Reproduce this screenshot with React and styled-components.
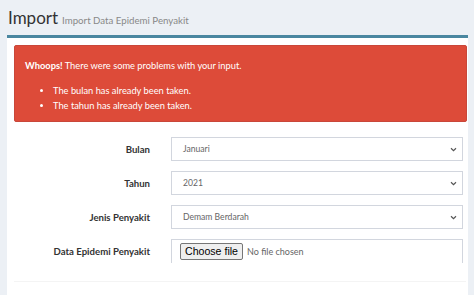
import React from 'react';
import styled, { createGlobalStyle } from 'styled-components';

const GlobalStyle = createGlobalStyle`
  body {
    margin: 0;
    background: #ecf0f5;
    font-family: Lato, 'Noto Sans', sans-serif;
  }
`;

const Page = styled.div`
  width: 474px;
  height: 295px;
  overflow: hidden;
  padding-left: 7px;
  box-sizing: border-box;
`;

const Header = styled.div`
  display: flex;
  align-items: baseline;
  height: 35px;
  padding: 7px 0 0 1px;
  box-sizing: border-box;
`;

const Title = styled.h1`
  margin: 0;
  font-size: 17px;
  font-weight: 400;
  color: #333;
  line-height: 22px;
`;

const SubTitle = styled.small`
  margin-left: 4px;
  font-size: 9.7px;
  color: #888;
`;

const Box = styled.div`
  width: 461px;
  background: #fff;
  border-top: 3px solid #4a87a0;
  padding: 7px 0 0 7px;
  box-sizing: border-box;
  height: 260px;
`;

const Alert = styled.div`
  width: 453px;
  background: #dd4b39;
  border: 1px solid #c9473a;
  border-radius: 2px;
  color: #fff;
  font-size: 9.3px;
  padding: 12px 10px 10px 10px;
  box-sizing: border-box;
  height: 77px;
  line-height: 15px;
`;

const List = styled.ul`
  margin: 10px 0 0;
  padding-left: 28px;
`;

const Form = styled.form`
  display: flex;
  flex-direction: column;
  gap: 10px;
  padding-top: 15px;
  padding-bottom: 18px;
  border-bottom: 1px solid #f4f4f4;
  margin-right: 2px;
`;

const Row = styled.div`
  display: grid;
  grid-template-columns: 136px 292px;
  column-gap: 21px;
  align-items: center;
`;

const Label = styled.label`
  text-align: right;
  font-size: 9.6px;
  font-weight: 700;
  color: #333;
`;

const SelectBox = styled.div`
  height: 24px;
  border: 1px solid #d2d6de;
  box-sizing: border-box;
  display: flex;
  align-items: center;
  justify-content: space-between;
  padding: 0 5px 0 11px;
  font-size: 8.6px;
  color: #666;
`;

const Chevron = () => (
  <svg width="7" height="5" viewBox="0 0 8 6">
    <path d="M1 1.5 L4 4.5 L7 1.5" stroke="#555" strokeWidth="1.4" fill="none" />
  </svg>
);

const FileBox = styled(SelectBox)`
  justify-content: flex-start;
  padding-left: 8px;
  border-bottom: none;
  font-size: 9px;
`;

const FileButton = styled.span`
  font-family: 'Liberation Sans', Arial, sans-serif;
  font-size: 10.6px;
  color: #000;
  background: #efefef;
  border: 1px solid #767676;
  border-radius: 2px;
  padding: 1px 4px;
  line-height: 13px;
  margin-right: 4px;
`;

const Select = ({ value }) => (
  <SelectBox>
    <span>{value}</span>
    <Chevron />
  </SelectBox>
);

export default function App() {
  return (
    <Page>
      <GlobalStyle />
      <Header>
        <Title>Import</Title>
        <SubTitle>Import Data Epidemi Penyakit</SubTitle>
      </Header>
      <Box>
        <Alert>
          <strong>Whoops!</strong> There were some problems with your input.
          <List>
            <li>The bulan has already been taken.</li>
            <li>The tahun has already been taken.</li>
          </List>
        </Alert>
        <Form>
          <Row>
            <Label>Bulan</Label>
            <Select value="Januari" />
          </Row>
          <Row>
            <Label>Tahun</Label>
            <Select value="2021" />
          </Row>
          <Row>
            <Label>Jenis Penyakit</Label>
            <Select value="Demam Berdarah" />
          </Row>
          <Row>
            <Label>Data Epidemi Penyakit</Label>
            <FileBox>
              <FileButton>Choose file</FileButton>
              <span>No file chosen</span>
            </FileBox>
          </Row>
        </Form>
      </Box>
    </Page>
  );
}
